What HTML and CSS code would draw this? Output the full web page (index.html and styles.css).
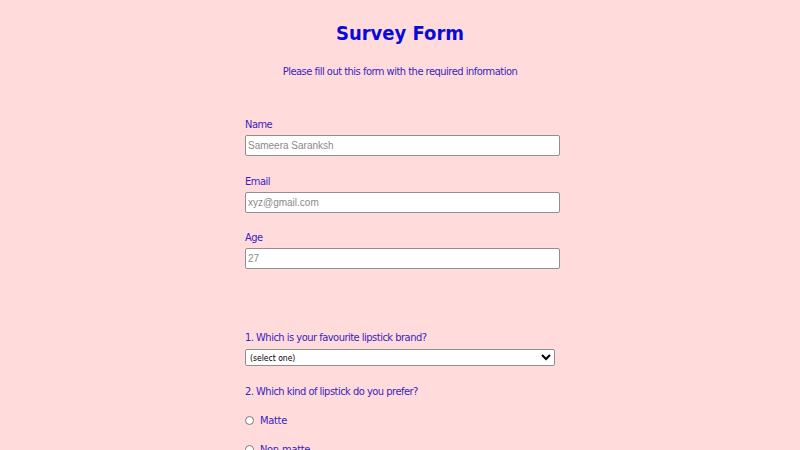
FILE: index.html
```html
<!DOCTYPE html>
<html>
<head>
<meta charset="utf-8">
<title>Survey Form</title>
<link rel="stylesheet" href="styles.css">
</head>
<body>
<header class="header">
  <h1 class="title">Survey Form</h1>
  <p class="subtitle">Please fill out this form with the required information</p>
</header>
<form class="survey">
  <div class="field">
    <label class="label" for="name">Name</label>
    <input class="text-input" id="name" type="text" placeholder="Sameera Saranksh">
  </div>
  <div class="field">
    <label class="label" for="email">Email</label>
    <input class="text-input" id="email" type="email" placeholder="xyz@gmail.com">
  </div>
  <div class="field">
    <label class="label" for="age">Age</label>
    <input class="text-input" id="age" type="number" placeholder="27">
  </div>
  <div class="field question">
    <label class="label label-select" for="brand">1. Which is your favourite lipstick brand?</label>
    <select class="select" id="brand">
      <option>(select one)</option>
    </select>
  </div>
  <div class="field">
    <p class="label">2. Which kind of lipstick do you prefer?</p>
    <label class="radio"><input type="radio" name="kind"> Matte</label>
    <label class="radio"><input type="radio" name="kind"> Non-matte</label>
  </div>
</form>
</body>
</html>
```

FILE: styles.css
```css
html, body {
  margin: 0;
  padding: 0;
  background: #ffdbdb;
}
body {
  font-family: "DejaVu Sans Condensed", "DejaVu Sans", Verdana, sans-serif;
  font-stretch: condensed;
  color: #3a1ec0;
}
.header {
  text-align: center;
  padding-top: 19px;
}
.title {
  margin: 0;
  font-size: 20px;
  line-height: 28px;
  color: #0a0ad8;
  font-weight: bold;
}
.subtitle {
  margin: 17px 0 0;
  font-size: 11px;
  line-height: 15px;
  letter-spacing: -0.5px;
}
.survey {
  width: 310px;
  margin: 38px auto 0;
}
.field {
  margin-bottom: 17.5px;
}
.label {
  display: block;
  margin: 0 0 3px;
  font-size: 11px;
  line-height: 15px;
  letter-spacing: -0.5px;
}
.label-select {
  margin-bottom: 4px;
}
.text-input {
  display: block;
  box-sizing: border-box;
  width: 315px;
  height: 21px;
  margin: 0;
  padding: 0 2px;
  border: 1px solid #8f8f8f;
  border-radius: 2px;
  background: #fff;
  font-family: "Liberation Sans", Arial, sans-serif;
  font-size: 10px;
}
.text-input::placeholder {
  color: #8a8a8a;
}
.question {
  margin-top: 61px;
}
.select {
  display: block;
  box-sizing: border-box;
  width: 310px;
  height: 17px;
  margin: 0;
  border: 1px solid #8f8f8f;
  border-radius: 2px;
  background: #fff;
  font-family: "DejaVu Sans Condensed", "DejaVu Sans", sans-serif;
  font-size: 8.5px;
  color: #000;
}
.radio {
  display: flex;
  align-items: center;
  gap: 3px;
  margin-top: 14px;
  font-size: 11px;
  line-height: 15px;
  letter-spacing: -0.3px;
}
.radio input {
  margin: 0 3px 0 0;
  width: 9px;
  height: 9px;
}
```
